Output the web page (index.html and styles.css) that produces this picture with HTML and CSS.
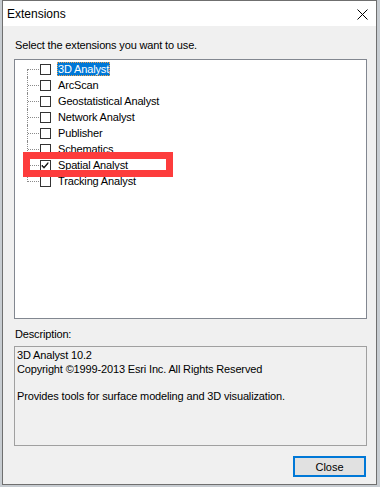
FILE: index.html
```html
<!DOCTYPE html>
<html lang="en">
<head>
  <meta charset="UTF-8">
  <title>Extensions</title>
  <link rel="stylesheet" href="styles.css">
</head>
<body>

<div class="window">
  <div class="titlebar">
    <span class="title">Extensions</span>
    <svg class="close-x" width="11" height="11" viewBox="0 0 11 11">
      <path d="M0.5 0.5 L10.5 10.5 M10.5 0.5 L0.5 10.5" stroke="#000" stroke-width="1" fill="none"/>
    </svg>
  </div>

  <div class="content">
    <div class="label">Select the extensions you want to use.</div>

    <div class="tree-box">
      <ul class="tree">
        <li class="first"><span class="branch"></span><span class="check"></span><span class="name selected">3D Analyst</span></li>
        <li><span class="branch"></span><span class="check"></span><span class="name">ArcScan</span></li>
        <li><span class="branch"></span><span class="check"></span><span class="name">Geostatistical Analyst</span></li>
        <li><span class="branch"></span><span class="check"></span><span class="name">Network Analyst</span></li>
        <li><span class="branch"></span><span class="check"></span><span class="name">Publisher</span></li>
        <li><span class="branch"></span><span class="check"></span><span class="name">Schematics</span></li>
        <li><span class="branch"></span><span class="check on">
          <svg width="9" height="9" viewBox="0 0 9 9"><path d="M1 4 L3 6 L7 1.5 L7 2.8 L3 7.3 L1 5.3 Z" fill="#000" stroke="#000" stroke-width="0.6"/></svg>
        </span><span class="name">Spatial Analyst</span></li>
        <li class="last"><span class="branch"></span><span class="check"></span><span class="name">Tracking Analyst</span></li>
      </ul>
      <div class="mark"></div>
    </div>

    <div class="label desc-label">Description:</div>

    <div class="desc-box">
      <div>3D Analyst 10.2</div>
      <div>Copyright &copy;1999-2013 Esri Inc. All Rights Reserved</div>
      <div>&nbsp;</div>
      <div>Provides tools for surface modeling and 3D visualization.</div>
    </div>

    <div class="buttons">
      <button class="btn">Close</button>
    </div>
  </div>
</div>

</body>
</html>
```

FILE: styles.css
```css
body {
  margin: 0;
  padding: 0;
  background: #c7ccd1;
  font-family: "Liberation Sans", Arial, sans-serif;
  font-size: 11px;
  letter-spacing: -0.15px;
  color: #000;
}
.window {
  margin-left: 2px;
  width: 373px;
  height: 483px;
  border: 1px solid #6f6f6f;
  background: #f0f0f0;
  display: flex;
  flex-direction: column;
}
.titlebar {
  height: 25px;
  background: #fff;
  display: flex;
  align-items: center;
  justify-content: space-between;
  padding: 0 8px 0 4px;
}
.title {
  font-size: 12px;
  letter-spacing: 0;
  margin-top: 1px;
}
.close-x {
  margin-top: 2px;
}
.content {
  padding: 12px 9px 0 11px;
  display: flex;
  flex-direction: column;
}
.label {
  line-height: 14px;
  height: 14px;
  padding-left: 1px;
}
.tree-box {
  position: relative;
  margin-top: 7px;
  height: 258px;
  border: 1px solid #828790;
  background: #fff;
}
.tree {
  list-style: none;
  margin: 0;
  padding: 1px 0 0 12px;
}
.tree li {
  height: 16px;
  display: flex;
  align-items: center;
}
.branch {
  position: relative;
  width: 13px;
  height: 16px;
  flex-shrink: 0;
}
.branch::before {
  content: '';
  position: absolute;
  left: 0;
  top: 0;
  height: 16px;
  border-left: 1px dotted #8a8a8a;
}
.tree li.first .branch::before {
  top: 8px;
  height: 8px;
}
.tree li.last .branch::before {
  height: 9px;
}
.branch::after {
  content: '';
  position: absolute;
  left: 1px;
  top: 8px;
  width: 11px;
  border-top: 1px dotted #8a8a8a;
}
.check {
  width: 11px;
  height: 11px;
  box-sizing: border-box;
  border: 1px solid #333;
  background: #fff;
  flex-shrink: 0;
  display: flex;
  align-items: center;
  justify-content: center;
}
.name {
  margin-left: 6px;
  padding: 0 1px;
  line-height: 14px;
  height: 14px;
}
.name.selected {
  background: #0078d7;
  color: #fff;
  outline: 1px dotted #e8a050;
  outline-offset: -1px;
}
.mark {
  position: absolute;
  left: 8px;
  top: 92px;
  width: 136px;
  height: 11px;
  border: 7px solid #fd3c3c;
}
.desc-label {
  margin-top: 8px;
}
.desc-box {
  margin-top: 5px;
  height: 96px;
  border: 1px solid #a0a0a0;
  padding: 2px 2px 0 2px;
  line-height: 13.5px;
}
.buttons {
  display: flex;
  justify-content: flex-end;
  margin-top: 10px;
  padding-right: 1px;
}
.btn {
  width: 73px;
  height: 21px;
  background: #e1e1e1;
  border: 2px solid #0078d7;
  font-family: "Liberation Sans", Arial, sans-serif;
  font-size: 11px;
  color: #000;
  padding: 0;
}
```
